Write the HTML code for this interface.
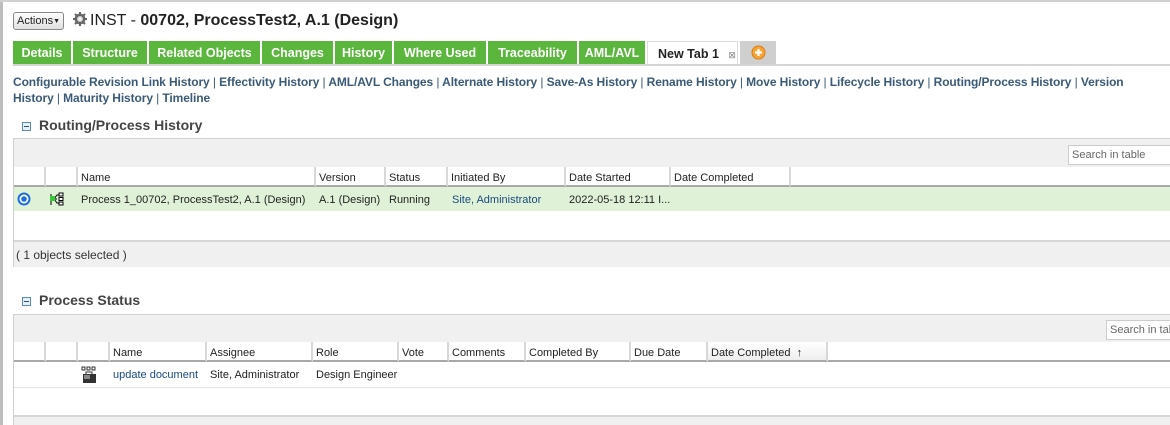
<!DOCTYPE html>
<html><head><meta charset="utf-8"><style>
*{margin:0;padding:0;box-sizing:border-box}
html,body{width:1170px;height:425px;overflow:hidden}
body{background:#fff;font-family:"Liberation Sans",Arial,sans-serif;position:relative}
.a{position:absolute;white-space:nowrap}
.tab{position:absolute;top:41px;height:23px;background:#5ab63c;color:#fff;font-weight:bold;font-size:12.5px;line-height:24px;text-align:center}
.lk{font-size:12px;font-weight:bold;color:#3a5a78;letter-spacing:-0.1px}
.sep{color:#3a5a78;font-weight:normal}
.sh{font-size:14px;font-weight:bold;color:#444}
.box{position:absolute;left:13px;right:-2px;border:1px solid #d0d0d0}
.tb{background:#f0f0f0}
.hd{position:absolute;font-size:11px;color:#222;line-height:23px;padding-left:3px;border-right:2px solid #d8d8d8;border-bottom:2px solid #a8a8a8;height:20px}
.cell{position:absolute;font-size:11px;color:#222;line-height:24px}
.minus{position:absolute;width:9px;height:9px;border:1px solid #5b8ab5;background:#e6f0f8}
.minus:after{content:"";position:absolute;left:1px;top:3px;width:5px;height:1px;background:#34506e}
.search{position:absolute;height:20px;border:1px solid #ccc;background:#fff;font-size:11px;color:#666;line-height:18px;padding-left:3px}
</style></head><body>
<div class="a" style="left:0;top:0;width:3px;height:425px;background:#bdbdbd"></div>
<div class="a" style="left:0;top:0;width:1170px;height:2px;background:#d0d0d0"></div>

<div class="a" style="left:13px;top:12px;width:51px;height:18px;border:1px solid #888;border-radius:3px;background:linear-gradient(#fdfdfd,#e0e0e0);font-size:11px;line-height:16px;padding-left:3px;color:#222">Actions<span style="font-size:7px;position:relative;top:-1px">▼</span></div>
<svg class="a" style="left:72px;top:11px" width="16" height="16" viewBox="0 0 16 16"><g fill="#999" stroke="#555" stroke-width=".8"><circle cx="8" cy="8" r="5"/></g><g stroke="#666" stroke-width="2"><line x1="8" y1="1" x2="8" y2="15"/><line x1="1" y1="8" x2="15" y2="8"/><line x1="3" y1="3" x2="13" y2="13"/><line x1="13" y1="3" x2="3" y2="13"/></g><circle cx="8" cy="8" r="3.5" fill="#ccc" stroke="#555" stroke-width=".8"/><circle cx="8" cy="8" r="1.5" fill="#fff"/></svg>
<div class="a" style="left:90px;top:12px;font-size:16px;color:#222">INST - <b>00702, ProcessTest2, A.1 (Design)</b></div>

<div class="tab" style="left:13px;width:58px">Details</div>
<div class="tab" style="left:73px;width:74px">Structure</div>
<div class="tab" style="left:149px;width:111px">Related Objects</div>
<div class="tab" style="left:262px;width:71px">Changes</div>
<div class="tab" style="left:335px;width:57px">History</div>
<div class="tab" style="left:394px;width:92px">Where Used</div>
<div class="tab" style="left:488px;width:89px">Traceability</div>
<div class="tab" style="left:579px;width:66px">AML/AVL</div>
<div class="tab" style="left:647px;width:91px;background:#fff;color:#222;border:1px solid #ddd;border-bottom:none;text-align:left;padding-left:10px">New Tab 1 <span style="font-size:9px;color:#888;font-weight:normal;margin-left:6px">⊠</span></div>
<div class="tab" style="left:740px;width:36px;background:#cfcfcf"><svg style="position:absolute;left:11px;top:4px" width="15" height="15"><circle cx="7.5" cy="7.5" r="6.5" fill="#f7a535" stroke="#e07b10"/><path d="M7.5 4v7M4 7.5h7" stroke="#fff" stroke-width="2.2"/></svg></div>
<div class="a" style="left:13px;top:64px;width:1157px;height:2px;background:#d4d4d4"></div>

<div class="a lk" style="left:13px;top:75px">Configurable Revision Link History <span class="sep">|</span> Effectivity History <span class="sep">|</span> AML/AVL Changes <span class="sep">|</span> Alternate History <span class="sep">|</span> Save-As History <span class="sep">|</span> Rename History <span class="sep">|</span> Move History <span class="sep">|</span> Lifecycle History <span class="sep">|</span> Routing/Process History <span class="sep">|</span> Version</div>
<div class="a lk" style="left:13px;top:91px">History <span class="sep">|</span> Maturity History <span class="sep">|</span> Timeline</div>

<div class="minus" style="left:22px;top:122px"></div>
<div class="a sh" style="left:39px;top:117px">Routing/Process History</div>

<div class="box" style="top:138px;height:129px">
 <div class="tb" style="position:absolute;left:0;right:0;top:0;height:28px"></div>
 <div class="search" style="left:1054px;top:6px;width:120px">Search in table</div>
 <div style="position:absolute;left:0;right:0;top:28px;height:20px;background:#fff"></div>
 <div class="hd" style="left:0;top:28px;width:32px"></div>
 <div class="hd" style="left:32px;top:28px;width:32px"></div>
 <div class="hd" style="left:64px;top:28px;width:238px">Name</div>
 <div class="hd" style="left:302px;top:28px;width:70px">Version</div>
 <div class="hd" style="left:372px;top:28px;width:62px">Status</div>
 <div class="hd" style="left:434px;top:28px;width:118px">Initiated By</div>
 <div class="hd" style="left:552px;top:28px;width:105px">Date Started</div>
 <div class="hd" style="left:657px;top:28px;width:120px">Date Completed</div>
 <div class="hd" style="left:777px;top:28px;width:400px;border-right:none"></div>
 <div style="position:absolute;left:0;right:0;top:48px;height:24px;background:#dff2d8"></div>
 <svg class="a" style="left:3px;top:53px" width="14" height="14"><circle cx="7" cy="7" r="5.5" fill="#fff" stroke="#1e6fe0" stroke-width="2"/><circle cx="7" cy="7" r="2.8" fill="#1e6fe0"/></svg>
 <svg class="a" style="left:35px;top:53px" width="16" height="14"><path d="M2 2v11M2 7h6M5 7l3-4h3M5 7l3 4h3" stroke="#000" fill="none" stroke-width="1"/><rect x="1" y="4" width="5" height="5" fill="#3c3"/><rect x="10" y="1" width="4" height="3" fill="#fff" stroke="#000"/><rect x="10" y="5.5" width="4" height="3" fill="#fff" stroke="#000"/><rect x="10" y="10" width="4" height="3" fill="#fff" stroke="#000"/></svg>
 <div class="cell" style="left:67px;top:49px">Process 1_00702, ProcessTest2, A.1 (Design)</div>
 <div class="cell" style="left:305px;top:49px">A.1 (Design)</div>
 <div class="cell" style="left:375px;top:49px">Running</div>
 <div class="cell" style="left:438px;top:49px;color:#1a4a80">Site, Administrator</div>
 <div class="cell" style="left:555px;top:49px">2022-05-18 12:11 I...</div>
 <div class="tb" style="position:absolute;left:0;right:0;top:101px;height:27px;border-top:2px solid #d6d6d6"></div>
 <div class="cell" style="left:2px;top:104px;font-size:12px;color:#333">( 1 objects selected )</div>
</div>

<div class="minus" style="left:22px;top:297px"></div>
<div class="a sh" style="left:39px;top:292px">Process Status</div>

<div class="box" style="top:314px;height:115px">
 <div class="tb" style="position:absolute;left:0;right:0;top:0;height:27px"></div>
 <div class="search" style="left:1092px;top:5px;width:80px">Search in tab</div>
 <div class="hd" style="left:0;top:27px;width:32px"></div>
 <div class="hd" style="left:32px;top:27px;width:32px"></div>
 <div class="hd" style="left:64px;top:27px;width:32px"></div>
 <div class="hd" style="left:96px;top:27px;width:97px">Name</div>
 <div class="hd" style="left:193px;top:27px;width:106px">Assignee</div>
 <div class="hd" style="left:299px;top:27px;width:86px">Role</div>
 <div class="hd" style="left:385px;top:27px;width:50px">Vote</div>
 <div class="hd" style="left:435px;top:27px;width:77px">Comments</div>
 <div class="hd" style="left:512px;top:27px;width:105px">Completed By</div>
 <div class="hd" style="left:617px;top:27px;width:77px">Due Date</div>
 <div class="hd" style="left:694px;top:27px;width:120px;background:linear-gradient(#fff,#eee)">Date Completed &nbsp;↑</div>
 <div class="hd" style="left:814px;top:27px;width:400px;border-right:none"></div>
 <svg class="a" style="left:67px;top:51px" width="16" height="18"><rect x="1" y="1" width="3" height="3" fill="#fff" stroke="#000" stroke-width=".8"/><rect x="6" y="1" width="3" height="3" fill="#fff" stroke="#000" stroke-width=".8"/><rect x="11" y="1" width="3" height="3" fill="#fff" stroke="#000" stroke-width=".8"/><rect x="5" y="6" width="6" height="3" fill="none" stroke="#333"/><rect x="2" y="8" width="13" height="9" fill="#333"/><rect x="3" y="9" width="6" height="4" fill="#888"/></svg>
 <div class="cell" style="left:99px;top:48px">&#8203;</div>
 <div class="cell" style="left:99px;top:48px;color:#1a4a80">update document</div>
 <div class="cell" style="left:196px;top:48px">Site, Administrator</div>
 <div class="cell" style="left:302px;top:48px">Design Engineer</div>
 <div style="position:absolute;left:0;right:0;top:72px;height:1px;background:#e6e6e6"></div>
 <div class="tb" style="position:absolute;left:0;right:0;top:100px;height:20px;border-top:2px solid #d6d6d6"></div>
</div>
</body></html>
